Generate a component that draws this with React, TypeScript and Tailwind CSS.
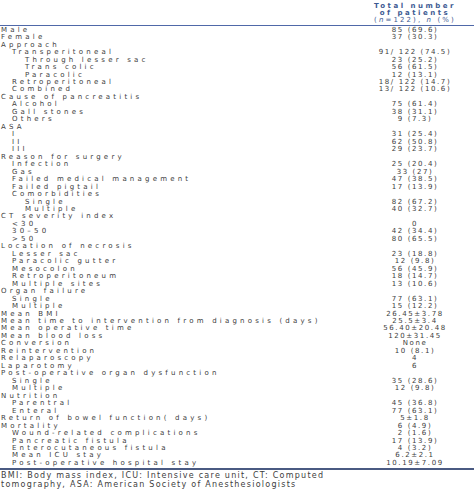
import React from "react";

type Row = [number, string, string];

const rows: Row[] = [
  [0, "Male", "85 (69.6)"],
  [0, "Female", "37 (30.3)"],
  [0, "Approach", ""],
  [1, "Transperitoneal", "91/ 122 (74.5)"],
  [2, "Through lesser sac", "23 (25.2)"],
  [2, "Trans colic", "56 (61.5)"],
  [2, "Paracolic", "12 (13.1)"],
  [1, "Retroperitoneal", "18/ 122 (14.7)"],
  [1, "Combined", "13/ 122 (10.6)"],
  [0, "Cause of pancreatitis", ""],
  [1, "Alcohol", "75 (61.4)"],
  [1, "Gall stones", "38 (31.1)"],
  [1, "Others", "9 (7.3)"],
  [0, "ASA", ""],
  [1, "I", "31 (25.4)"],
  [1, "II", "62 (50.8)"],
  [1, "III", "29 (23.7)"],
  [0, "Reason for surgery", ""],
  [1, "Infection", "25 (20.4)"],
  [1, "Gas", "33 (27)"],
  [1, "Failed medical management", "47 (38.5)"],
  [1, "Failed pigtail", "17 (13.9)"],
  [1, "Comorbidities", ""],
  [2, "Single", "82 (67.2)"],
  [2, "Multiple", "40 (32.7)"],
  [0, "CT severity index", ""],
  [1, "<30", "0"],
  [1, "30–50", "42 (34.4)"],
  [1, ">50", "80 (65.5)"],
  [0, "Location of necrosis", ""],
  [1, "Lesser sac", "23 (18.8)"],
  [1, "Paracolic gutter", "12 (9.8)"],
  [1, "Mesocolon", "56 (45.9)"],
  [1, "Retroperitoneum", "18 (14.7)"],
  [1, "Multiple sites", "13 (10.6)"],
  [0, "Organ failure", ""],
  [1, "Single", "77 (63.1)"],
  [1, "Multiple", "15 (12.2)"],
  [0, "Mean BMI", "26.45±3.78"],
  [0, "Mean time to intervention from diagnosis (days)", "25.5±3.4"],
  [0, "Mean operative time", "56.40±20.48"],
  [0, "Mean blood loss", "120±31.45"],
  [0, "Conversion", "None"],
  [0, "Reintervention", "10 (8.1)"],
  [0, "Relaparoscopy", "4"],
  [0, "Laparotomy", "6"],
  [0, "Post-operative organ dysfunction", ""],
  [1, "Single", "35 (28.6)"],
  [1, "Multiple", "12 (9.8)"],
  [0, "Nutrition", ""],
  [1, "Parentral", "45 (36.8)"],
  [1, "Enteral", "77 (63.1)"],
  [0, "Return of bowel function( days)", "5±1.8"],
  [0, "Mortality", "6 (4.9)"],
  [1, "Wound-related complications", "2 (1.6)"],
  [1, "Pancreatic fistula", "17 (13.9)"],
  [1, "Enterocutaneous fistula", "4 (3.2)"],
  [1, "Mean ICU stay", "6.2±2.1"],
  [1, "Post-operative hospital stay", "10.19±7.09"],
];

const indent = ["pl-[1px]", "pl-[12px]", "pl-[25px]"];

export default function App() {
  return (
    <div className="w-[474px] h-[492px] bg-white overflow-hidden font-['DejaVu_Sans',sans-serif] text-[#404040]">
      <div className="flex pt-[2.5px]">
        <div className="flex-1" />
        <div className="w-[118px] flex flex-col items-center text-[7px] leading-[7.4px] tracking-[2.5px] font-bold text-[#3d5a92]">
          <span>Total number</span>
          <span>of patients</span>
          <span className="font-normal tracking-[2.1px]">
            (<i>n</i>=122), <i>n</i> (%)
          </span>
        </div>
      </div>
      <div className="h-[1px] bg-[#4f68a8] mt-[0.5px]" />
      <div className="flex flex-col pt-[0.5px] text-[7px] leading-[7.47px]">
        {rows.map(([lvl, label, value], i) => (
          <div key={i} className="flex h-[7.47px] whitespace-nowrap">
            <div className={`flex-1 tracking-[3.2px] ${indent[lvl]}`}>{label}</div>
            <div className="w-[118px] text-center tracking-[1.6px]">{value}</div>
          </div>
        ))}
      </div>
      <div className="h-[2px] bg-[#4a5a82] mt-[0.5px]" />
      <div className="text-[8px] leading-[9px] tracking-[1.25px] pl-[1px] pt-[1px] whitespace-nowrap">
        <div>BMI: Body mass index, ICU: Intensive care unit, CT: Computed</div>
        <div>tomography, ASA: American Society of Anesthesiologists</div>
      </div>
    </div>
  );
}
